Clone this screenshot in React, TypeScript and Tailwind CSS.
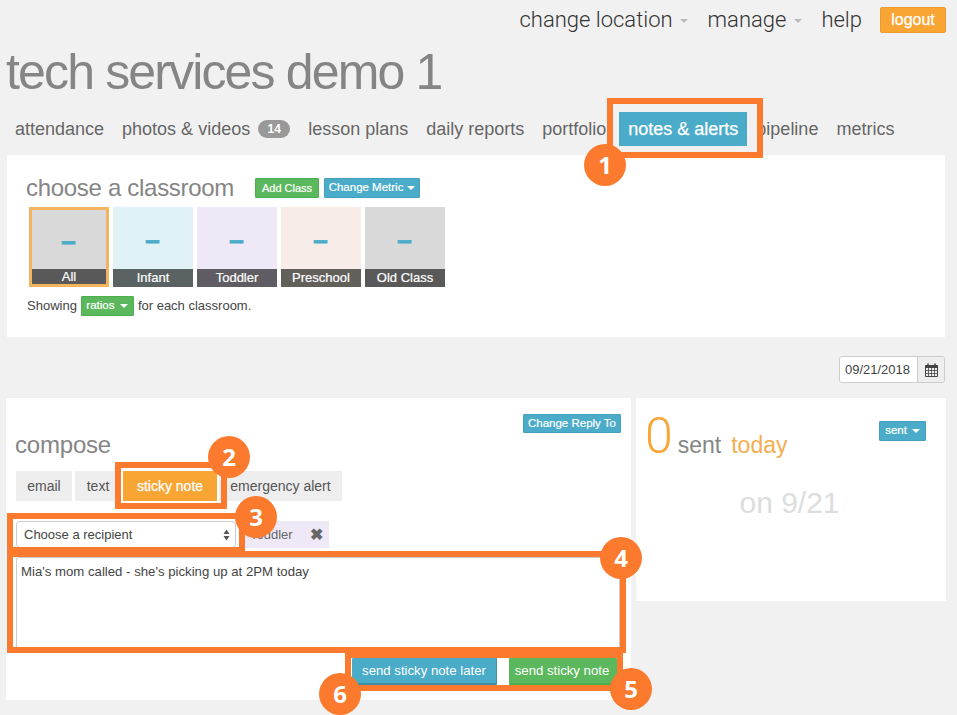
import React from "react";

const classrooms = [
  { name: "All", bg: "bg-[#d9d9d9]", bar: "bg-[#595959]", selected: true },
  { name: "Infant", bg: "bg-[#e0f2f6]", bar: "bg-[#5a6263]" },
  { name: "Toddler", bg: "bg-[#eee8f7]", bar: "bg-[#5f5c63]" },
  { name: "Preschool", bg: "bg-[#f8ece8]", bar: "bg-[#63605c]" },
  { name: "Old Class", bg: "bg-[#d9d9d9]", bar: "bg-[#595959]" },
];

const Caret = ({ color = "border-t-white" }: { color?: string }) => (
  <span className={`inline-block w-0 h-0 border-x-[4px] border-x-transparent border-t-[4px] ${color}`} />
);

const Marker = ({ n, className }: { n: number; className: string }) => (
  <div
    className={`absolute w-[42px] h-[42px] rounded-full bg-[#fb7a2d] text-white flex items-center justify-center font-['Open_Sans',sans-serif] font-bold text-[24px] ${className}`}
  >
    {n}
  </div>
);

const Outline = ({ className }: { className: string }) => (
  <div className={`absolute border-[#fb7a2d] ${className}`} />
);

const CalendarIcon = () => (
  <svg width="13" height="14" viewBox="0 0 13 14" className="text-[#444]">
    <path d="M0.5 2.5 H12.5 V13.5 H0.5 Z" fill="none" stroke="currentColor" />
    <path d="M0.5 2 H12.5 V5 H0.5 Z" fill="currentColor" />
    <path d="M3 0.5 V3 M10 0.5 V3" stroke="currentColor" strokeWidth="1.6" />
    <path d="M3.5 5 V13 M6.5 5 V13 M9.5 5 V13 M1 7.5 H12 M1 10.5 H12" stroke="currentColor" strokeWidth="0.8" />
  </svg>
);

const App = () => {
  return (
    <div className="relative w-[957px] h-[715px] overflow-hidden bg-[#f1f1f1] font-['Liberation_Sans',Arial,sans-serif] text-[#555]">
      {/* top links */}
      <div className="h-[40px] flex justify-end items-start pt-[7px] pr-[11px] font-['Roboto',sans-serif] font-light text-[22px] text-[#333]">
        <div className="flex items-center h-[26px]">
          <div className="flex items-center -mt-[2px]">
            <span>change location</span>
            <span className="ml-[7px] mr-[20px] flex mt-[3px]"><Caret color="border-t-[#bbb]" /></span>
            <span>manage</span>
            <span className="ml-[8px] mr-[19px] flex mt-[3px]"><Caret color="border-t-[#bbb]" /></span>
            <span>help</span>
          </div>
          <button className="ml-[18px] w-[66px] h-[26px] rounded-[2px] bg-[#f9a533] border border-[#ec9a2a] text-white text-[16px] font-['Liberation_Sans',sans-serif] [-webkit-text-stroke:0.25px_white]">
            logout
          </button>
        </div>
      </div>

      {/* title */}
      <h1 className="h-[70px] pl-[6px] text-[50px] leading-[64px] text-[#858585] tracking-[-1.85px]">
        tech services demo 1
      </h1>

      {/* main tabs */}
      <nav className="h-[45px] pl-[6px] flex items-start text-[18px] text-[#666] whitespace-nowrap">
        <div className="flex items-center h-[38px]">
          <a className="px-[9px]">attendance</a>
          <a className="px-[9px] pr-0 flex items-center">
            photos &amp; videos
            <span className="ml-[8px] w-[32px] justify-center h-[18px] rounded-[9px] bg-[#999] text-white text-[12px] font-bold flex items-center">14</span>
          </a>
          <a className="ml-[9px] px-[9px]">lesson plans</a>
          <a className="px-[9px]">daily reports</a>
          <a className="px-[9px]">portfolio</a>
          <a className="ml-[4px] w-[128px] h-[34px] bg-[#4bacc9] text-white text-[18px] flex items-center justify-center [-webkit-text-stroke:0.25px_white]">notes &amp; alerts</a>
          <a className="px-[9px]">pipeline</a>
          <a className="px-[9px]">metrics</a>
        </div>
      </nav>

      {/* classroom panel */}
      <section className="ml-[7px] w-[938px] h-[182px] bg-white pl-[19px] pt-[19px]">
        <div className="flex items-center h-[28px]">
          <h2 className="text-[24px] text-[#858585] font-normal tracking-[-0.3px]">choose a classroom</h2>
          <button className="ml-[21px] h-[20px] w-[64px] bg-[#5cb85c] border border-[#4cae4c] rounded-[1px] text-white text-[11px] [-webkit-text-stroke:0.2px_white]">Add Class</button>
          <button className="ml-[5px] h-[20px] w-[96px] bg-[#4bacc9] border border-[#46a0bb] rounded-[1px] text-white text-[11.5px] flex items-center justify-center gap-[4px] [-webkit-text-stroke:0.2px_white]">
            Change Metric <Caret />
          </button>
        </div>
        <div className="mt-[5px] ml-[3px] flex gap-[4px]">
          {classrooms.map((c) => (
            <div
              key={c.name}
              className={`relative w-[80px] h-[80px] flex flex-col ${c.bg} ${c.selected ? "border-[3px] border-[#f4b45f]" : ""}`}
            >
              <div className="flex-1 flex items-center justify-center pt-[4px] pr-[1px] text-[#4bacc9] text-[26px] font-bold [-webkit-text-stroke:0.8px_#4bacc9]">–</div>
              <div className={`${c.selected ? "h-[15px] leading-[15px]" : "h-[18px] leading-[18px]"} ${c.bar} text-white text-[13px] text-center [-webkit-text-stroke:0.2px_white]`}>{c.name}</div>
            </div>
          ))}
        </div>
        <div className="mt-[9px] ml-[1px] flex items-center text-[13px] text-[#444]">
          Showing
          <button className="mx-[4px] h-[20px] w-[53px] bg-[#5cb85c] border border-[#4cae4c] rounded-[1px] text-white text-[11.5px] flex items-center justify-center gap-[6px] [-webkit-text-stroke:0.2px_white]">
            ratios <Caret />
          </button>
          for each classroom.
        </div>
      </section>

      {/* date picker */}
      <div className="mt-[19px] mr-[12px] h-[27px] flex justify-end">
        <div className="flex h-[27px] w-[106px] border border-[#ccc] rounded-[3px] overflow-hidden text-[13px] text-[#444]">
          <div className="w-[78px] bg-white flex items-center justify-center border-r border-[#ccc] pr-[2px]">09/21/2018</div>
          <div className="flex-1 bg-[#eee] flex items-center justify-center">
            <CalendarIcon />
          </div>
        </div>
      </div>

      <div className="mt-[15px] ml-[6px] flex items-start gap-[5px]">
        {/* compose panel */}
        <section className="relative w-[625px] h-[302px] bg-white">
          <button className="absolute right-[10px] top-[16px] h-[19px] w-[98px] bg-[#4bacc9] border border-[#46a0bb] rounded-[1px] text-white text-[11.5px] [-webkit-text-stroke:0.2px_white]">
            Change Reply To
          </button>
          <h2 className="pl-[9px] pt-[33px] text-[24px] leading-[28px] text-[#858585] tracking-[-0.2px]">compose</h2>
          <div className="mt-[12px] ml-[10px] flex text-[14px] h-[30px] text-[#555]">
            <div className="w-[56px] bg-[#eee] flex items-center justify-center">email</div>
            <div className="ml-[3px] w-[46px] bg-[#eee] flex items-center justify-center">text</div>
            <div className="ml-[2px] w-[94px] bg-[#f9a533] text-white flex items-center justify-center [-webkit-text-stroke:0.25px_white]">sticky note</div>
            <div className="ml-[2px] w-[123px] bg-[#eee] flex items-center justify-center">emergency alert</div>
          </div>
          <div className="mt-[20px] ml-[10px] flex h-[27px] gap-[9px] text-[13px]">
            <div className="w-[220px] border border-[#ccc] rounded-[4px] pl-[7px] pr-[5px] flex items-center justify-between text-[#444]">
              Choose a recipient
              <svg width="7" height="12" viewBox="0 0 7 12" className="text-[#555]">
                <path d="M3.5 0.5 L6.5 5 H0.5 Z M3.5 11.5 L0.5 7 H6.5 Z" fill="currentColor" />
              </svg>
            </div>
            <div className="w-[84px] bg-[#eee8f7] pl-[5px] pr-[6px] flex items-center justify-between text-[#666]">
              Toddler
              <span className="text-[16px] font-bold text-[#666]">✖</span>
            </div>
          </div>
          <div className="mt-[9px] ml-[10px] w-[604px] h-[91px] border border-[#ccc] rounded-[2px] pl-[4px] pt-[4px] text-[13.2px] text-[#444]">
            Mia's mom called - she's picking up at 2PM today
          </div>
          <div className="mt-[10px] ml-[346px] flex gap-[12px] text-[13.2px] text-white h-[27px]">
            <button className="w-[145px] bg-[#4bacc9] border-b-2 border-r border-[#3f8fa8] rounded-[1px]">send sticky note later</button>
            <button className="w-[108px] bg-[#5cb85c] border-b-2 border-[#4cae4c] rounded-[1px] pr-[2px]">send sticky note</button>
          </div>
        </section>

        {/* sent panel */}
        <section className="relative w-[310px] h-[203px] bg-white">
          <button className="absolute left-[243px] top-[23px] h-[20px] w-[47px] bg-[#4bacc9] border border-[#46a0bb] rounded-[1px] text-white text-[11.5px] flex items-center justify-center gap-[5px] [-webkit-text-stroke:0.2px_white]">
            sent <Caret />
          </button>
          <div className="pl-[9px] pt-[9px] h-[72px] flex items-baseline">
            <span className="text-[50px] leading-[58px] text-[#f9a533] font-['Roboto',sans-serif] font-light">0</span>
            <span className="ml-[5px] text-[23px] text-[#858585]">sent</span>
            <span className="ml-[10px] text-[23px] text-[#f4ae4f]">today</span>
          </div>
          <p className="mt-[15px] text-center text-[30px] leading-[36px] text-[#dddddd] pr-[3px]">on 9/21</p>
        </section>
      </div>

      {/* annotations */}
      <Outline className="left-[607px] top-[98px] w-[156px] h-[60px] border-[6px]" />
      <Marker n={1} className="left-[584px] top-[144px]" />
      <Outline className="left-[115px] top-[462px] w-[112px] h-[47px] border-[6px]" />
      <Marker n={2} className="left-[208px] top-[436px]" />
      <Outline className="left-[7px] top-[513px] w-[238px] h-[40px] border-[6px]" />
      <Marker n={3} className="left-[235px] top-[496px]" />
      <Outline className="left-[7px] top-[551px] w-[619px] h-[102px] border-[6px]" />
      <Marker n={4} className="left-[600px] top-[537px]" />
      <Outline className="left-[345px] top-[652px] w-[278px] h-[39px] border-[6px]" />
      <Marker n={5} className="left-[610px] top-[668px]" />
      <Marker n={6} className="left-[319px] top-[673px]" />
    </div>
  );
};

export default App;
